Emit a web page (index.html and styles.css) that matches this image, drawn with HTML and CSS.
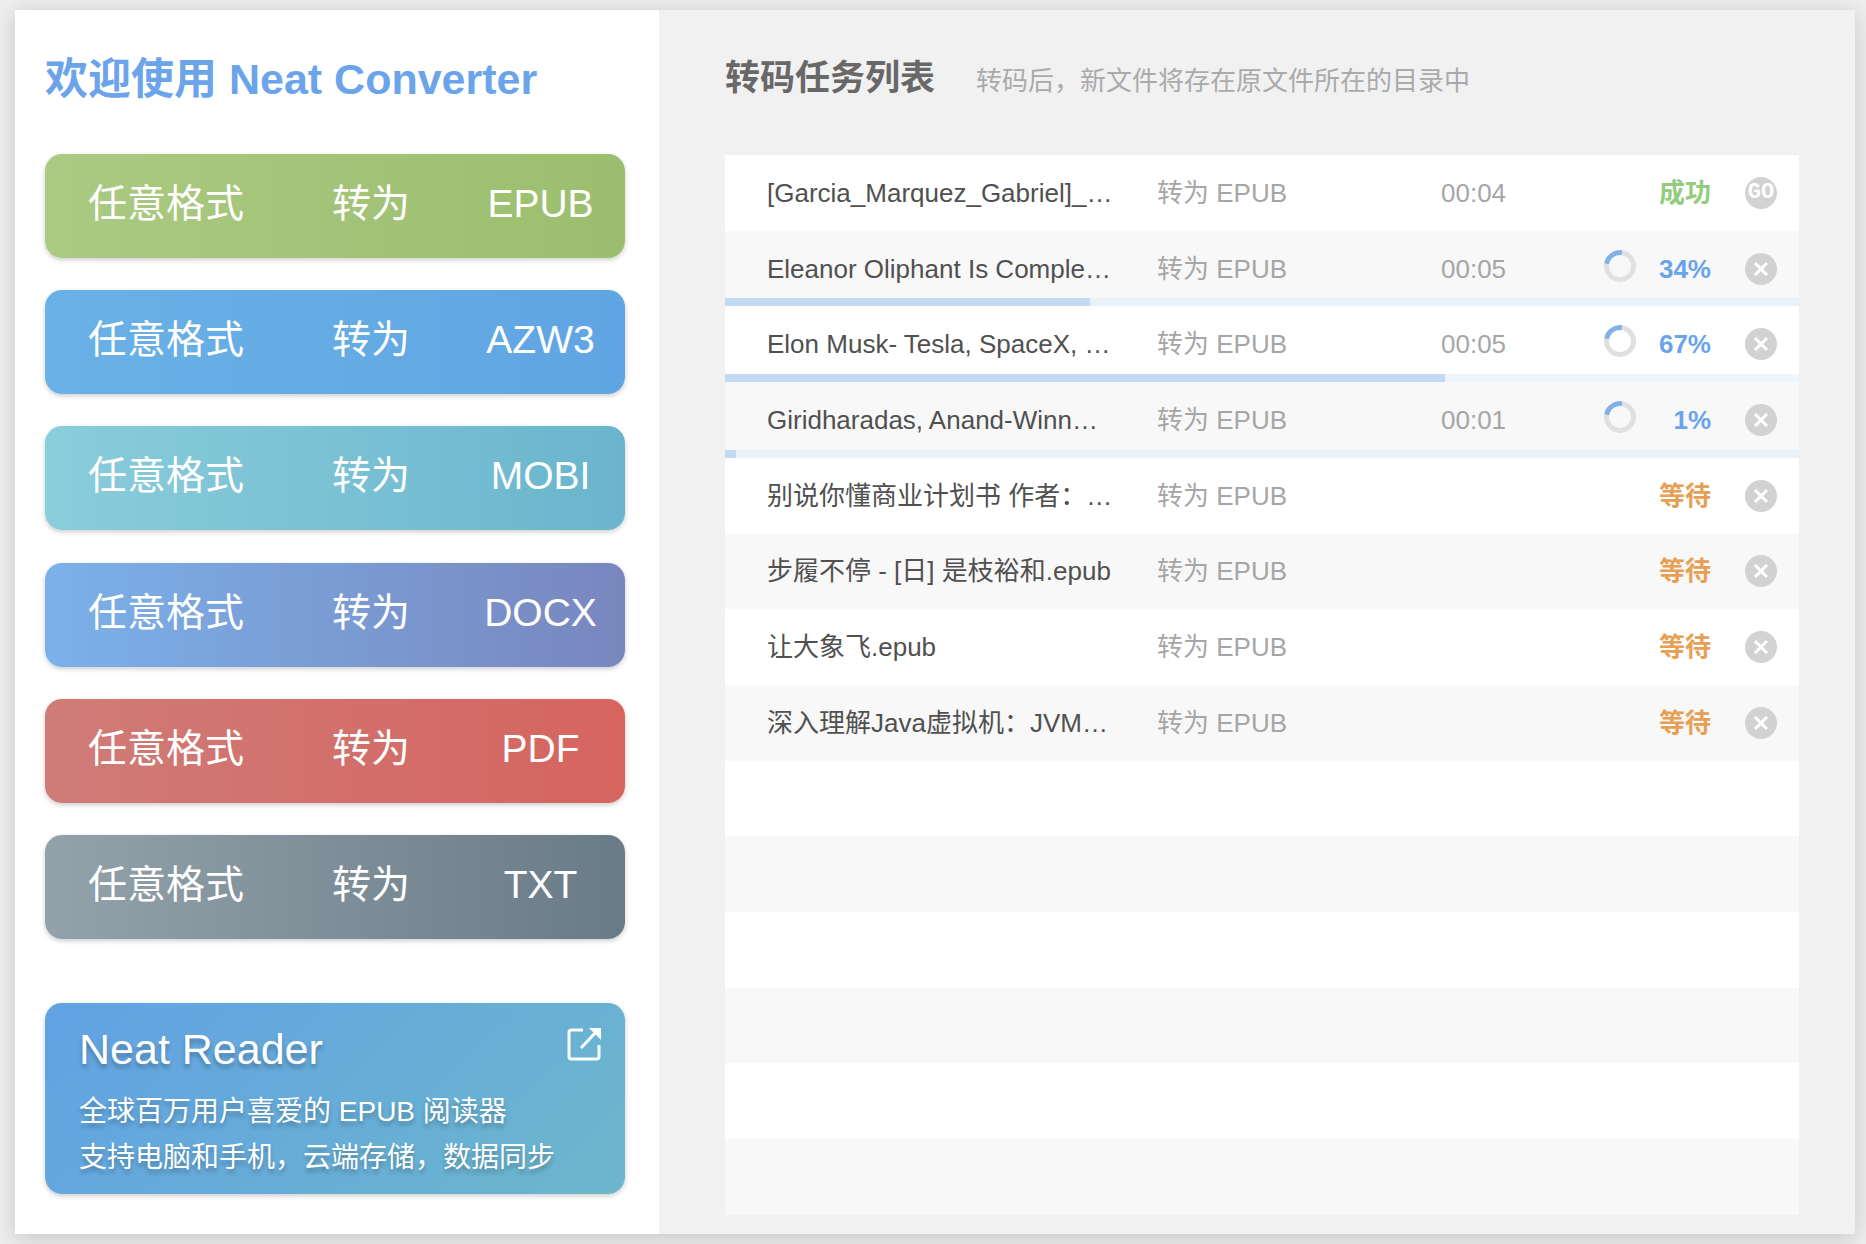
FILE: index.html
```html
<!DOCTYPE html>
<html lang="zh-CN">
<head>
<meta charset="utf-8">
<title>Neat Converter</title>
<link rel="stylesheet" href="styles.css">
</head>
<body>

<div class="window">
  <div class="sidebar">
    <h1 class="welcome">欢迎使用 Neat Converter</h1>

    <div class="formats">
      <button class="format epub"><span>任意格式</span><span>转为</span><span class="target">EPUB</span></button>
      <button class="format azw3"><span>任意格式</span><span>转为</span><span class="target">AZW3</span></button>
      <button class="format mobi"><span>任意格式</span><span>转为</span><span class="target">MOBI</span></button>
      <button class="format docx"><span>任意格式</span><span>转为</span><span class="target">DOCX</span></button>
      <button class="format pdf"><span>任意格式</span><span>转为</span><span class="target">PDF</span></button>
      <button class="format txt"><span>任意格式</span><span>转为</span><span class="target">TXT</span></button>
    </div>

    <a class="reader" href="#">
      <span class="reader-top">
        <span class="reader-name">Neat Reader</span>
        <svg class="open" viewBox="0 0 34 34" fill="none" stroke="#fff" stroke-width="3">
          <path d="M16 3H4.500Q2 3 2 5.500V29.500Q2 32 4.500 32H29.500Q32 32 32 29.500V18"/>
          <path d="M14 21L29 5"/>
          <path d="M22 1H34V13Z" fill="#fff" stroke="none"/>
        </svg>
      </span>
      <span class="reader-text">全球百万用户喜爱的 EPUB 阅读器</span>
      <span class="reader-text">支持电脑和手机，云端存储，数据同步</span>
    </a>
  </div>

  <div class="tasks">
    <div class="tasks-head">
      <h2>转码任务列表</h2>
      <p>转码后，新文件将存在原文件所在的目录中</p>
    </div>

    <div class="list">
      <table>
        <colgroup>
          <col class="c-name"><col class="c-format"><col class="c-time"><col class="c-spin"><col class="c-status"><col class="c-action">
        </colgroup>
        <tbody>
        <tr>
          <td class="name">[Garcia_Marquez_Gabriel]_…</td>
          <td>转为 EPUB</td>
          <td>00:04</td>
          <td></td>
          <td class="status success">成功</td>
          <td class="action"><button class="round">GO</button></td>
        </tr>
        <tr>
          <td class="name">Eleanor Oliphant Is Comple…</td>
          <td>转为 EPUB</td>
          <td>00:05</td>
          <td><div class="spinner"></div></td>
          <td class="status running">34%</td>
          <td class="action"><button class="round" aria-label="取消"><svg viewBox="0 0 16 16"><path d="M2 2L14 14M14 2L2 14"/></svg></button><div class="progress"><div class="bar" style="width:34%"></div></div></td>
        </tr>
        <tr>
          <td class="name">Elon Musk- Tesla, SpaceX, …</td>
          <td>转为 EPUB</td>
          <td>00:05</td>
          <td><div class="spinner"></div></td>
          <td class="status running">67%</td>
          <td class="action"><button class="round" aria-label="取消"><svg viewBox="0 0 16 16"><path d="M2 2L14 14M14 2L2 14"/></svg></button><div class="progress"><div class="bar" style="width:67%"></div></div></td>
        </tr>
        <tr>
          <td class="name">Giridharadas, Anand-Winn…</td>
          <td>转为 EPUB</td>
          <td>00:01</td>
          <td><div class="spinner"></div></td>
          <td class="status running">1%</td>
          <td class="action"><button class="round" aria-label="取消"><svg viewBox="0 0 16 16"><path d="M2 2L14 14M14 2L2 14"/></svg></button><div class="progress"><div class="bar" style="width:1%"></div></div></td>
        </tr>
        <tr>
          <td class="name">别说你懂商业计划书 作者：…</td>
          <td>转为 EPUB</td>
          <td></td>
          <td></td>
          <td class="status waiting">等待</td>
          <td class="action"><button class="round" aria-label="取消"><svg viewBox="0 0 16 16"><path d="M2 2L14 14M14 2L2 14"/></svg></button></td>
        </tr>
        <tr>
          <td class="name">步履不停 - [日] 是枝裕和.epub</td>
          <td>转为 EPUB</td>
          <td></td>
          <td></td>
          <td class="status waiting">等待</td>
          <td class="action"><button class="round" aria-label="取消"><svg viewBox="0 0 16 16"><path d="M2 2L14 14M14 2L2 14"/></svg></button></td>
        </tr>
        <tr>
          <td class="name">让大象飞.epub</td>
          <td>转为 EPUB</td>
          <td></td>
          <td></td>
          <td class="status waiting">等待</td>
          <td class="action"><button class="round" aria-label="取消"><svg viewBox="0 0 16 16"><path d="M2 2L14 14M14 2L2 14"/></svg></button></td>
        </tr>
        <tr>
          <td class="name">深入理解Java虚拟机：JVM…</td>
          <td>转为 EPUB</td>
          <td></td>
          <td></td>
          <td class="status waiting">等待</td>
          <td class="action"><button class="round" aria-label="取消"><svg viewBox="0 0 16 16"><path d="M2 2L14 14M14 2L2 14"/></svg></button></td>
        </tr>
        <!-- empty rows keep the stripes down to the bottom -->
        <tr><td colspan="6"></td></tr>
        <tr><td colspan="6"></td></tr>
        <tr><td colspan="6"></td></tr>
        <tr><td colspan="6"></td></tr>
        <tr><td colspan="6"></td></tr>
        <tr><td colspan="6"></td></tr>
        </tbody>
      </table>
    </div>
  </div>
</div>

</body>
</html>
```

FILE: styles.css
```css
* {
  box-sizing: border-box;
}

body {
  margin: 0;
  padding: 10px 11px 10px 15px;
  background: #ededed;
  font-family: "Liberation Sans", Arial, "Noto Sans CJK SC", sans-serif;
  font-size: 26px;
}

h1, h2, p {
  margin: 0;
}

button {
  font-family: inherit;
  border: none;
  cursor: pointer;
}

.window {
  display: flex;
  min-height: calc(100vh - 20px);
  background: #f1f1f1;
  box-shadow: 0 4px 20px rgba(0, 0, 0, 0.16);
}

/* left side */
.sidebar {
  display: flex;
  flex-direction: column;
  width: 35%;
  padding: 36px 34px 40px 30px;
  background: #fff;
}

.welcome {
  height: 64px;
  margin-bottom: 44px;
  line-height: 66px;
  font-size: 43px;
  color: #6ba4ea;
  white-space: nowrap;
}

.formats {
  flex: 1;
  display: flex;
  flex-direction: column;
  justify-content: space-between;
  gap: 16px;
}

.format {
  display: grid;
  grid-template-columns: 244px 124px 1fr;
  align-items: center;
  height: 104px;
  padding: 0 0 4px 43px;
  border-radius: 17px;
  box-shadow: 0 2px 5px rgba(0, 0, 0, 0.2);
  color: #fff;
  font-size: 39px;
  line-height: 56px;
  text-align: left;
}

.target {
  text-align: center;
}

.epub { background: linear-gradient(to right, #abca82, #9bbe6e); }
.azw3 { background: linear-gradient(to right, #69b1e6, #60a5e3); }
.mobi { background: linear-gradient(to right, #8acddb, #6ab5cd); }
.docx { background: linear-gradient(to right, #7bb1e9, #7986be); }
.pdf { background: linear-gradient(to right, #cf7c78, #d6645f); }
.txt { background: linear-gradient(to right, #93a2aa, #697b87); }

.reader {
  display: flex;
  flex-direction: column;
  height: 191px;
  margin-top: 64px;
  padding: 16px 24px 0 34px;
  border-radius: 17px;
  background: linear-gradient(135deg, #61a2e4, #6cb7cc);
  box-shadow: 0 2px 5px rgba(0, 0, 0, 0.2);
  color: #fff;
  text-decoration: none;
  text-shadow: 0 4px 4px rgba(0, 0, 0, 0.25);
}

.reader-top {
  display: flex;
  justify-content: space-between;
  height: 70px;
}

.reader-name {
  font-size: 43px;
  line-height: 60px;
}

.open {
  width: 34px;
  height: 34px;
  margin-top: 8px;
}

.reader-text {
  font-size: 28px;
  line-height: 46px;
  white-space: nowrap;
}

/* right side */
.tasks {
  flex: 1;
  display: flex;
  flex-direction: column;
  padding: 36px 56px 19px 66px;
}

.tasks-head {
  display: flex;
  align-items: center;
  gap: 41px;
  height: 64px;
  margin-bottom: 45px;
  white-space: nowrap;
}

.tasks-head h2 {
  font-size: 35px;
  line-height: 64px;
  color: #686868;
}

.tasks-head p {
  padding-top: 6px;
  line-height: 64px;
  color: #aaa;
}

.list {
  flex: 1;
  display: flex;
}

table {
  width: 100%;
  border-collapse: collapse;
  table-layout: fixed;
  background: #fff;
  color: #a6a6a6;
  line-height: 38px;
}

.c-name { width: 432px; }
.c-format { width: 284px; }
.c-time { width: 163px; }
.c-spin { width: 32px; }
.c-action { width: 88px; }

tr {
  position: relative;
  height: 75px;
}

tr:nth-child(even) {
  background: #f8f8f8;
}

td {
  padding: 0;
  white-space: nowrap;
}

.name {
  padding-left: 42px;
  color: #505050;
}

.status {
  font-weight: bold;
  text-align: right;
}

.success { color: #92cc7c; }
.running { color: #69a4eb; }
.waiting { color: #e6a055; }

.spinner {
  width: 32px;
  height: 32px;
  margin-bottom: 6px;
  border: 5px solid #e0e0e0;
  border-radius: 50%;
  border-top-color: #82b1e8;
  transform: rotate(-36deg);
}

.action {
  padding-left: 34px;
}

.round {
  display: flex;
  align-items: center;
  justify-content: center;
  width: 32px;
  height: 32px;
  padding: 0;
  border-radius: 50%;
  background: #d2d2d2;
  color: #fff;
  font-family: "Liberation Mono", "Courier New", monospace;
  font-size: 22px;
  font-weight: bold;
}

.round svg {
  width: 16px;
  height: 16px;
  stroke: #fff;
  stroke-width: 3;
}

.progress {
  position: absolute;
  left: 0;
  right: 0;
  bottom: 0;
  height: 8px;
  background: rgba(190, 216, 243, 0.25);
}

.bar {
  height: 100%;
  background: #c2daf3;
}
```
